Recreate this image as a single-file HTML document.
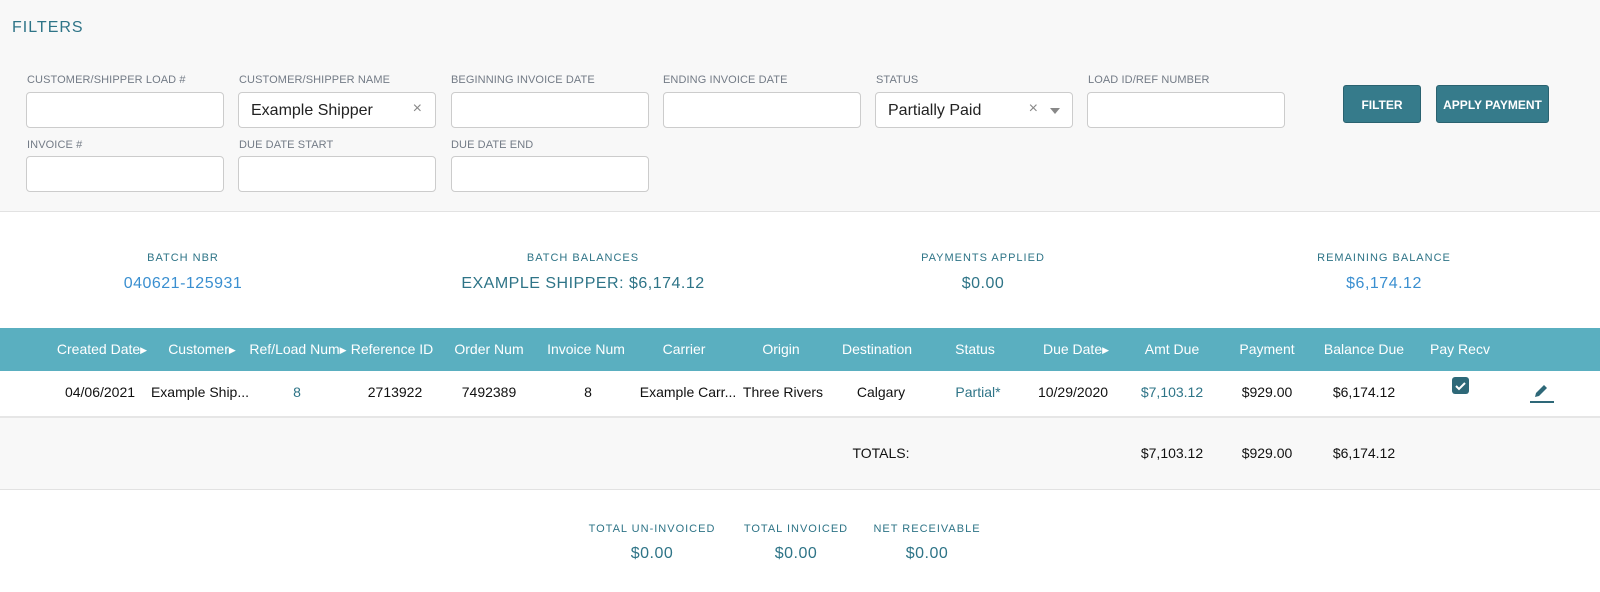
<!DOCTYPE html><html><head><style>
*{box-sizing:border-box;margin:0;padding:0}
body{width:1600px;height:592px;font-family:"Liberation Sans",sans-serif;background:#fff;position:relative;overflow:hidden;color:#111}
.a{position:absolute}
.lbl{font-size:11px;color:#737b86;letter-spacing:.1px}
.inp{position:absolute;width:198px;height:36px;border:1px solid #ccc;border-radius:4px;background:#fff;font-size:16px;padding:9px 12px;color:#222}
.btn{position:absolute;background:#367b8b;color:#fff;font-size:12px;font-weight:bold;border-radius:3px;text-align:center;line-height:38px;height:38px;border:1px solid #2a6270}
.sh{font-size:11px;color:#2e7487;letter-spacing:1px;text-align:center;width:300px}
.sv{font-size:16px;color:#2e7487;text-align:center;width:400px;letter-spacing:.5px}
.c{position:absolute;transform:translateX(-50%);white-space:nowrap;font-size:14px}
.h{color:#fff;top:341px}
.h i{font-style:normal;font-size:9px;vertical-align:1px}
.r{top:384px}
.t{color:#2e7487}
</style></head><body>
<div class="a" style="left:0;top:0;width:1600px;height:212px;background:#f8f8f8;border-bottom:1px solid #e2e2e2"></div>
<div class="a" style="left:12px;top:19px;font-size:16px;color:#2e7487;letter-spacing:1px">FILTERS</div>
<div class="a lbl" style="left:27px;top:74px">CUSTOMER/SHIPPER LOAD #</div>
<div class="a lbl" style="left:239px;top:74px">CUSTOMER/SHIPPER NAME</div>
<div class="a lbl" style="left:451px;top:74px">BEGINNING INVOICE DATE</div>
<div class="a lbl" style="left:663px;top:74px">ENDING INVOICE DATE</div>
<div class="a lbl" style="left:876px;top:74px">STATUS</div>
<div class="a lbl" style="left:1088px;top:74px">LOAD ID/REF NUMBER</div>
<div class="inp" style="left:26px;top:92px"></div>
<div class="inp" style="left:238px;top:92px">Example Shipper<span style="position:absolute;right:13px;top:7px;color:#888">×</span></div>
<div class="inp" style="left:451px;top:92px"></div>
<div class="inp" style="left:663px;top:92px"></div>
<div class="inp" style="left:875px;top:92px">Partially Paid<span style="position:absolute;right:34px;top:7px;color:#888">×</span><span style="position:absolute;right:12px;top:15px;border:5px solid transparent;border-top:6px solid #888"></span></div>
<div class="inp" style="left:1087px;top:92px"></div>
<div class="btn" style="left:1343px;top:85px;width:78px">FILTER</div>
<div class="btn" style="left:1436px;top:85px;width:113px">APPLY PAYMENT</div>
<div class="a lbl" style="left:27px;top:139px">INVOICE #</div>
<div class="a lbl" style="left:239px;top:139px">DUE DATE START</div>
<div class="a lbl" style="left:451px;top:139px">DUE DATE END</div>
<div class="inp" style="left:26px;top:156px"></div>
<div class="inp" style="left:238px;top:156px"></div>
<div class="inp" style="left:451px;top:156px"></div>

<div class="a sh" style="left:33px;top:252px">BATCH NBR</div>
<div class="a sv" style="left:-17px;top:275px;color:#3a8fd0">040621-125931</div>
<div class="a sh" style="left:433px;top:252px">BATCH BALANCES</div>
<div class="a sv" style="left:383px;top:275px">EXAMPLE SHIPPER: $6,174.12</div>
<div class="a sh" style="left:833px;top:252px">PAYMENTS APPLIED</div>
<div class="a sv" style="left:783px;top:275px">$0.00</div>
<div class="a sh" style="left:1234px;top:252px">REMAINING BALANCE</div>
<div class="a sv" style="left:1184px;top:275px;color:#3a8fd0">$6,174.12</div>

<div class="a" style="left:0;top:328px;width:1600px;height:43px;background:#5aafc0"></div>
<div class="c h" style="left:102px">Created Date<i>▶</i></div>
<div class="c h" style="left:202px">Customer<i>▶</i></div>
<div class="c h" style="left:298px">Ref/Load Num<i>▶</i></div>
<div class="c h" style="left:392px">Reference ID</div>
<div class="c h" style="left:489px">Order Num</div>
<div class="c h" style="left:586px">Invoice Num</div>
<div class="c h" style="left:684px">Carrier</div>
<div class="c h" style="left:781px">Origin</div>
<div class="c h" style="left:877px">Destination</div>
<div class="c h" style="left:975px">Status</div>
<div class="c h" style="left:1076px">Due Date<i>▶</i></div>
<div class="c h" style="left:1172px">Amt Due</div>
<div class="c h" style="left:1267px">Payment</div>
<div class="c h" style="left:1364px">Balance Due</div>
<div class="c h" style="left:1460px">Pay Recv</div>

<div class="c r" style="left:100px">04/06/2021</div>
<div class="c r" style="left:200px">Example Ship...</div>
<div class="c r t" style="left:297px">8</div>
<div class="c r" style="left:395px">2713922</div>
<div class="c r" style="left:489px">7492389</div>
<div class="c r" style="left:588px">8</div>
<div class="c r" style="left:688px">Example Carr...</div>
<div class="c r" style="left:783px">Three Rivers</div>
<div class="c r" style="left:881px">Calgary</div>
<div class="c r t" style="left:978px">Partial*</div>
<div class="c r" style="left:1073px">10/29/2020</div>
<div class="c r t" style="left:1172px">$7,103.12</div>
<div class="c r" style="left:1267px">$929.00</div>
<div class="c r" style="left:1364px">$6,174.12</div>
<div class="a" style="left:1452px;top:377px;width:17px;height:17px;background:#2e6878;border-radius:3px"><svg width="17" height="17"><path d="M4 9l3 3 6-6" stroke="#fff" stroke-width="2" fill="none"/></svg></div>
<svg class="a" style="left:1530px;top:380px" width="24" height="24"><path d="M5 17l1-4 8-8 3 3-8 8z" fill="#2e6878"/><rect x="0" y="21" width="24" height="2" fill="#2e6878"/></svg>
<div class="a" style="left:0;top:416px;width:1600px;height:74px;background:#f8f8f8;border-top:2px solid #e6e6e6;border-bottom:1px solid #e2e2e2"></div>
<div class="c" style="left:881px;top:445px">TOTALS:</div>
<div class="c" style="left:1172px;top:445px">$7,103.12</div>
<div class="c" style="left:1267px;top:445px">$929.00</div>
<div class="c" style="left:1364px;top:445px">$6,174.12</div>

<div class="a sh" style="left:502px;top:523px">TOTAL UN-INVOICED</div>
<div class="a sv" style="left:452px;top:545px">$0.00</div>
<div class="a sh" style="left:646px;top:523px">TOTAL INVOICED</div>
<div class="a sv" style="left:596px;top:545px">$0.00</div>
<div class="a sh" style="left:777px;top:523px">NET RECEIVABLE</div>
<div class="a sv" style="left:727px;top:545px">$0.00</div>
</body></html>
